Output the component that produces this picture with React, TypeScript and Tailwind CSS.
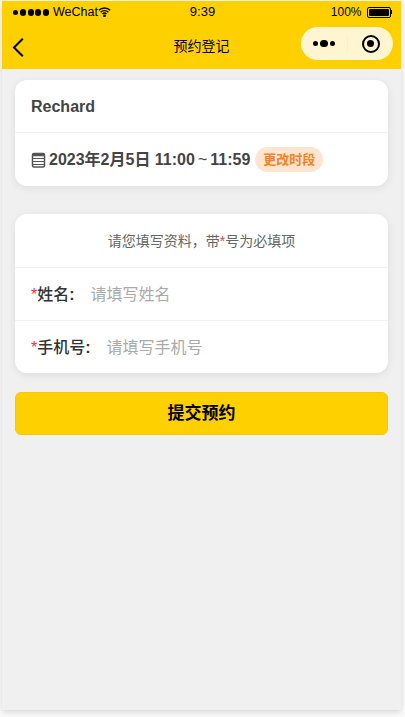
import React from 'react';

const font = { fontFamily: '"Liberation Sans", "Noto Sans CJK SC", sans-serif' };

const Row = ({ label, hint }: { label: string; hint: string }) => (
  <div className="flex h-[53px] items-center border-t border-[#f0f0f0] pl-4 pt-[1px]">
    <span className="text-[16px] font-medium text-[#333]">
      <span className="text-[#f33]">*</span>
      {label}
      <b>:</b>
    </span>
    <span className="ml-[16px] text-[16px] text-[#aaa]">{hint}</span>
  </div>
);

export default function App() {
  return (
    <div className="h-[717px] w-[405px] overflow-hidden bg-[#fafafa] pl-[2px] pt-[1px]" style={font}>
      <div className="flex h-[709px] w-[399px] flex-col bg-[#f0f0f0] shadow-[0_2px_6px_rgba(0,0,0,0.15)]">
        <div className="bg-[#ffd000] text-black">
          <div className="flex h-[22px] items-center justify-between pl-[11px] pr-[9px] text-[12px]">
            <div className="flex w-[140px] items-center">
              <div className="flex items-center gap-[1.75px]">
                <i className="h-[5px] w-[5px] rounded-full bg-black" />
                <i className="h-[7px] w-[6px] rounded-full bg-black" />
                <i className="h-[7px] w-[6px] rounded-full bg-black" />
                <i className="h-[7px] w-[6px] rounded-full bg-black" />
                <i className="h-[7px] w-[6px] rounded-full bg-black" />
              </div>
              <span className="ml-[4px] text-[12.5px]">WeChat</span>
              <svg width="13" height="10" viewBox="0 0 13 10" fill="none" stroke="black" strokeWidth="1.4">
                <path d="M.8 3.3a8.2 8.2 0 0 1 11.4 0M2.6 5.2a5.6 5.6 0 0 1 7.8 0M4.5 7a2.9 2.9 0 0 1 4 0" />
                <circle cx="6.5" cy="8.8" r=".7" fill="black" />
              </svg>
            </div>
            <span className="text-[13px]">9:39</span>
            <div className="flex w-[140px] items-center justify-end">
              <span>100%</span>
              <div className="ml-[5px] h-[11px] w-[24px] rounded-[2px] border border-black p-[1px]">
                <div className="h-full w-full rounded-[1px] bg-black" />
              </div>
              <div className="h-[4px] w-[1.5px] bg-black" />
            </div>
          </div>
          <div className="relative flex h-[46px] items-center justify-center">
            <svg className="absolute left-[10px] top-[15px]" width="13" height="20" viewBox="0 0 13 20" fill="none" stroke="black" strokeWidth="2">
              <path d="M10.8 .8 2 9.5l8.8 8.8" />
            </svg>
            <span className="text-[14px]">预约登记</span>
            <div className="absolute left-[299px] top-[4px] flex h-[33px] w-[92px] items-center rounded-full bg-[#fff5d1]">
              <div className="flex w-[46px] items-center justify-center gap-[2px]">
                <i className="h-[5px] w-[5px] rounded-full bg-black" />
                <i className="h-[7px] w-[8px] rounded-full bg-black" />
                <i className="h-[5px] w-[5px] rounded-full bg-black" />
              </div>
              <div className="h-[18px] w-px bg-[#fdf0c4]" />
              <div className="flex flex-1 items-center justify-center">
                <div className="flex h-[18px] w-[18px] items-center justify-center rounded-full border-2 border-black">
                  <i className="h-[7px] w-[7px] rounded-full bg-black" />
                </div>
              </div>
            </div>
          </div>
        </div>

        <div className="flex flex-col pl-[13px] pr-[13px] pt-[11px]">
          <div className="rounded-[12px] bg-white shadow-[0_2px_8px_rgba(0,0,0,0.08)]">
            <div className="flex h-[52px] items-center pl-4 pt-[1px] text-[16px] font-bold text-[#444]">Rechard</div>
            <div className="flex h-[54px] items-center border-t border-[#f0f0f0] pl-4 text-[16px] font-bold text-[#444]">
              <svg width="15" height="16" viewBox="0 0 15 16" fill="none" stroke="#555" strokeWidth="1.5">
                <rect x="1.5" y="1.5" width="12" height="13.5" rx="1.5" />
                <path d="M1.5 3h12" strokeWidth="2.5" />
                <path d="M1.5 6.5h12M1.5 9.5h12M1.5 12.5h12" strokeWidth="1.2" />
              </svg>
              <span className="ml-[3px]">2023年2月5日 11:00</span>
              <span className="mx-[3px] font-normal">~</span>
              <span>11:59</span>
              <span className="ml-[5px] flex h-[25px] w-[68px] items-center justify-center rounded-full bg-[#ffe5d0] text-[13px] text-[#f58220]">更改时段</span>
            </div>
          </div>

          <div className="mt-[28px] rounded-[12px] bg-white shadow-[0_2px_8px_rgba(0,0,0,0.08)]">
            <div className="flex h-[53px] items-center justify-center pt-[1px] text-[14px] text-[#666]">
              请您填写资料，带<span className="text-[#f33]">*</span>号为必填项
            </div>
            <Row label="姓名" hint="请填写姓名" />
            <Row label="手机号" hint="请填写手机号" />
          </div>

          <div className="mt-[19px] flex h-[43px] items-center justify-center rounded-[6px] border border-[#f5c800] bg-[#ffd000] text-[17px] font-bold text-black">
            提交预约
          </div>
        </div>
      </div>
    </div>
  );
}
